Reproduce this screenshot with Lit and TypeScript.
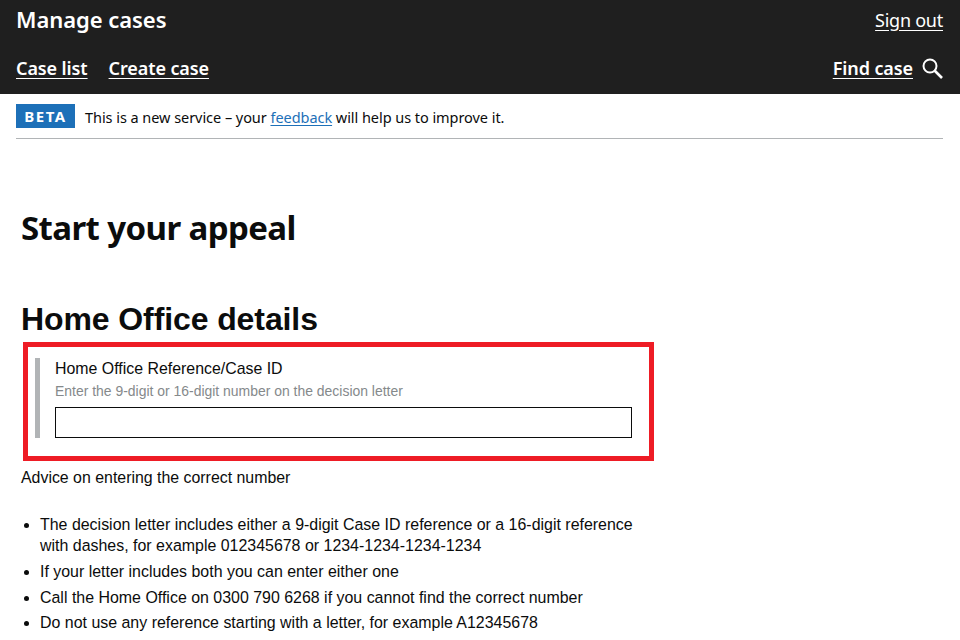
import { LitElement, html, css } from "lit";
import { customElement } from "lit/decorators.js";

@customElement("app-root")
export class AppRoot extends LitElement {
  static styles = css`
    :host {
      display: block;
      width: 960px;
      height: 640px;
      overflow: hidden;
      background: #fff;
      color: #0b0c0c;
      font-family: "Liberation Sans", Arial, sans-serif;
    }
    .gds { font-family: "Noto Sans", sans-serif; }
    header {
      background: #1f1f1f;
      color: #fff;
      height: 94px;
      box-sizing: border-box;
      padding: 0 17px 0 16px;
      display: flex;
      flex-direction: column;
    }
    .row { display: flex; justify-content: space-between; align-items: center; }
    .top { height: 40px; }
    .nav { height: 58px; padding-top: 4px; box-sizing: border-box; }
    .title { font-size: 22px; font-weight: 600; letter-spacing: -0.05px; }
    header a { color: #fff; text-decoration: underline; text-underline-offset: 3px; }
    .signout { font-size: 18px; font-weight: 400; letter-spacing: -0.25px; padding-top: 2px; }
    .links { display: flex; gap: 21px; }
    .links a, .find a { font-size: 18px; font-weight: 600; letter-spacing: -0.1px; }
    .find { display: flex; align-items: center; gap: 9px; }
    .find svg { display: block; }
    .beta {
      margin: 0 17px 0 16px;
      height: 45px;
      border-bottom: 1px solid #b1b4b6;
      display: flex;
      align-items: flex-start;
      gap: 10px;
      box-sizing: border-box;
    }
    .tag {
      margin-top: 10px;
      width: 59px;
      height: 24px;
      background: #1d70b8;
      color: #fff;
      font-size: 15px;
      font-weight: 700;
      letter-spacing: 1.5px;
      display: flex;
      align-items: center;
      justify-content: center;
    }
    .beta p {
      margin: 13px 0 0;
      font-size: 14.5px;
      line-height: 20px;
      letter-spacing: -0.05px;
    }
    .beta p a { color: #1d70b8; text-underline-offset: 2px; }
    main { padding: 0 0 0 21px; width: 630px; }
    h1 {
      margin: 67px 0 0;
      font-size: 33px;
      line-height: 44px;
      font-weight: 700;
      letter-spacing: -0.6px;
    }
    h2 {
      margin: 50px 0 0;
      font-size: 32px;
      line-height: 38px;
      font-weight: 700;
      letter-spacing: -0.1px;
    }
    .box {
      margin: 4px 0 0 2px;
      width: 631px;
      height: 119px;
      box-sizing: border-box;
      border: 5px solid #ee1c25;
      padding: 11px 0 0 7px;
    }
    .field {
      border-left: 5px solid #b1b4b6;
      padding-left: 15px;
      height: 80px;
      box-sizing: border-box;
    }
    .label { font-size: 15.9px; line-height: 20px; padding-top: 1px; }
    .hint { font-size: 13.95px; line-height: 18px; color: #85898b; margin-top: 3px; }
    .input {
      margin-top: 7px;
      width: 577px;
      height: 31px;
      box-sizing: border-box;
      border: 1.5px solid #0b0c0c;
    }
    .advice { margin: 7px 0 0; font-size: 15.9px; line-height: 20px; }
    ul { margin: 26px 0 0; padding: 0 0 0 19px; font-size: 15.95px; line-height: 21px; }
    li { margin-bottom: 5px; }
    li:last-child { margin-top: -1px; }
  `;

  render() {
    return html`
      <header class="gds">
        <div class="row top">
          <span class="title">Manage cases</span>
          <a class="signout" href="#">Sign out</a>
        </div>
        <div class="row nav">
          <div class="links"><a href="#">Case list</a><a href="#">Create case</a></div>
          <div class="find">
            <a href="#">Find case</a>
            <svg width="21" height="21" viewBox="0 0 21 21" fill="none" stroke="#fff" stroke-width="2">
              <circle cx="8" cy="8" r="6.5"></circle>
              <path d="M12.5 12.5l7.5 7.5" stroke-width="2.6"></path>
            </svg>
          </div>
        </div>
      </header>
      <div class="beta gds">
        <span class="tag">BETA</span>
        <p>This is a new service – your <a href="#">feedback</a> will help us to improve it.</p>
      </div>
      <main>
        <h1 class="gds">Start your appeal</h1>
        <h2>Home Office details</h2>
        <div class="box">
          <div class="field">
            <div class="label">Home Office Reference/Case ID</div>
            <div class="hint">Enter the 9-digit or 16-digit number on the decision letter</div>
            <div class="input"></div>
          </div>
        </div>
        <p class="advice">Advice on entering the correct number</p>
        <ul>
          <li>The decision letter includes either a 9-digit Case ID reference or a 16-digit reference with dashes, for example 012345678 or 1234-1234-1234-1234</li>
          <li>If your letter includes both you can enter either one</li>
          <li>Call the Home Office on 0300 790 6268 if you cannot find the correct number</li>
          <li>Do not use any reference starting with a letter, for example A12345678</li>
        </ul>
      </main>
    `;
  }
}
